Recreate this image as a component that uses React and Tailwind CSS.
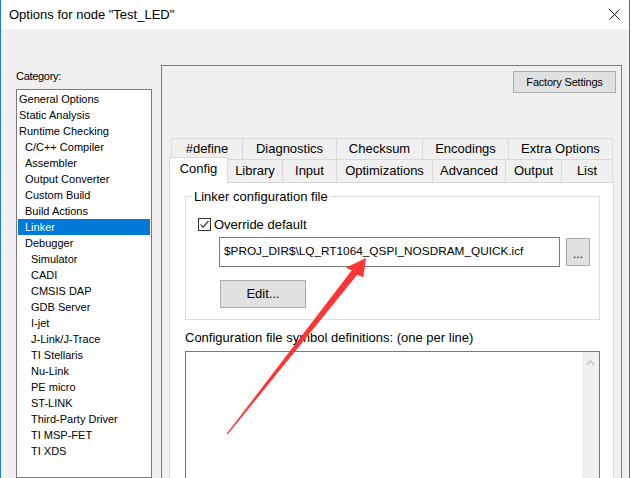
import React from 'react'

const categories = [
  ['General Options', 0], ['Static Analysis', 0], ['Runtime Checking', 0],
  ['C/C++ Compiler', 1], ['Assembler', 1], ['Output Converter', 1], ['Custom Build', 1],
  ['Build Actions', 1], ['Linker', 1], ['Debugger', 1],
  ['Simulator', 2], ['CADI', 2], ['CMSIS DAP', 2], ['GDB Server', 2], ['I-jet', 2],
  ['J-Link/J-Trace', 2], ['TI Stellaris', 2], ['Nu-Link', 2], ['PE micro', 2], ['ST-LINK', 2],
  ['Third-Party Driver', 2], ['TI MSP-FET', 2], ['TI XDS', 2],
]
const indent = ['pl-[1px]', 'pl-[7px]', 'pl-[13px]']

const topTabs = [
  ['#define', 'w-[71px]'],
  ['Diagnostics', 'w-[94px]'],
  ['Checksum', 'w-[86px]'],
  ['Encodings', 'w-[86px]'],
  ['Extra Options', 'w-[105px] border-r'],
]
const bottomTabs = [
  ['Library', 'w-[55px]'],
  ['Input', 'w-[54px]'],
  ['Optimizations', 'w-[96px]'],
  ['Advanced', 'w-[73px]'],
  ['Output', 'w-[56px]'],
  ['List', 'w-[51px]'],
]

const CategoryList = () => (
  <div className="ml-[15px] mt-[40px] flex flex-col">
    <div className="text-[11px] leading-[14px] tracking-[-0.3px] text-black">Category:</div>
    <div className="mt-[6px] w-[136px] h-[420px] border border-[#7a7a7a] bg-white pt-[1px]">
      {categories.map(([name, level]) => (
        <div
          key={name}
          className={
            'mx-[1px] h-[16px] leading-[16px] text-[11px] ' + indent[level] + ' ' +
            (name === 'Linker' ? 'bg-[#0078d7] text-white' : 'text-black')
          }
        >
          {name}
        </div>
      ))}
    </div>
  </div>
)

const Tabs = () => (
  <div className="ml-[7px] mt-[45px] w-[445px] text-[13px] text-black">
    <div className="flex h-[21px] pl-[2px]">
      {topTabs.map(([label, w]) => (
        <div key={label} className={'h-[21px] border-t border-l border-[#d9d9d9] bg-[#f0f0f0] flex items-center justify-center ' + w}>
          {label}
        </div>
      ))}
    </div>
    <div className="flex items-end h-[23px]">
      <div className="relative z-10 -mb-px h-[26px] w-[59px] border-t border-l border-r border-[#d9d9d9] bg-white flex items-center justify-center pb-[4px]">
        Config
      </div>
      {bottomTabs.map(([label, w]) => (
        <div key={label} className={'h-[23px] border-t border-r border-[#d9d9d9] bg-[#f0f0f0] flex items-center justify-center ' + w}>
          {label}
        </div>
      ))}
    </div>
    <div className="h-[320px] border-t border-l border-r border-[#d9d9d9] bg-white pl-[15px] pt-[6px]">
      <fieldset className="w-[415px] border border-[#dcdcdc] pb-[11px]">
        <legend className="ml-[6px] px-[2px] leading-[15px]">Linker configuration file</legend>
        <div className="mt-[13px] ml-[12px] flex items-center h-[15px]">
          <svg width="13" height="13" viewBox="0 0 13 13" className="shrink-0">
            <rect x="0.5" y="0.5" width="12" height="12" fill="#fff" stroke="#333" />
            <polyline points="2.5,6.5 5,9.2 10.5,3.2" fill="none" stroke="#222" strokeWidth="1.1" />
          </svg>
          <span className="ml-[3px] leading-[15px]">Override default</span>
        </div>
        <div className="mt-[5px] ml-[33px] flex items-center">
          <div className="w-[341px] h-[30px] border border-[#7a7a7a] bg-white flex items-center pl-[4px] text-[11.8px]">
            $PROJ_DIR$\LQ_RT1064_QSPI_NOSDRAM_QUICK.icf
          </div>
          <button className="ml-[6px] w-[24px] h-[28px] border border-[#adadad] bg-[#e1e1e1] text-[12px] leading-[12px] pt-[3px]">...</button>
        </div>
        <button className="mt-[13px] ml-[34px] w-[86px] h-[28px] border border-[#adadad] bg-[#e1e1e1] text-[13px] block">
          Edit...
        </button>
      </fieldset>
      <div className="mt-[10px] leading-[15px]">Configuration file symbol definitions: (one per line)</div>
      <div className="mt-[6px] w-[415px] h-[160px] border border-[#7a7a7a] bg-white flex justify-end">
        <div className="w-[17px] h-full bg-[#f0f0f0] flex justify-center pt-[8px]">
          <svg width="9" height="6" viewBox="0 0 9 6">
            <polyline points="0.5,5 4.5,1 8.5,5" fill="none" stroke="#c2c2c2" strokeWidth="1.4" />
          </svg>
        </div>
      </div>
    </div>
  </div>
)

const Arrow = () => (
  <svg className="absolute left-0 top-0 pointer-events-none" width="632" height="478" viewBox="0 0 632 478">
    <polygon
      points="366,258 363.3,277.2 357.2,274.7 227.6,434.5 226.8,433.5 351.8,270.3 345.7,267.8"
      fill="#ff3535"
    />
  </svg>
)

export default function App() {
  return (
    <div className="relative w-[632px] h-[478px] overflow-hidden bg-white font-['Liberation_Sans',Arial,sans-serif]">
      <div className="w-[630px] h-[478px] border-x border-[#1a7fd4] flex flex-col bg-[#f0f0f0]">
        <div className="h-[29px] shrink-0 bg-white flex items-center justify-between">
          <span className="pl-[8px] text-[13px] text-black">Options for node "Test_LED"</span>
          <svg width="11" height="11" viewBox="0 0 11 11" className="mr-[9px]">
            <path d="M0.5 0.5 L10.5 10.5 M10.5 0.5 L0.5 10.5" stroke="#111" strokeWidth="1" />
          </svg>
        </div>
        <div className="flex flex-1 min-h-0 overflow-hidden">
          <CategoryList />
          <div className="ml-[9px] mt-[36px] w-[461px] h-[440px] shrink-0 border border-[#7a7a7a]">
            <div className="flex justify-end mt-[5px] mr-[5px]">
              <button className="w-[103px] h-[22px] border border-[#adadad] bg-[#e1e1e1] text-[11px] tracking-[-0.2px] text-black">
                Factory Settings
              </button>
            </div>
            <Tabs />
          </div>
        </div>
      </div>
      <Arrow />
    </div>
  )
}
